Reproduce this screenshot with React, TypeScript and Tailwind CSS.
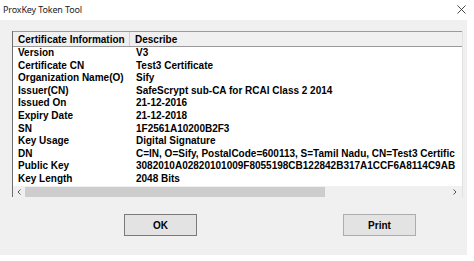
import React from "react";

const rows: [string, string][] = [
  ["Version", "V3"],
  ["Certificate CN", "Test3 Certificate"],
  ["Organization Name(O)", "Sify"],
  ["Issuer(CN)", "SafeScrypt sub-CA for RCAI Class 2 2014"],
  ["Issued On", "21-12-2016"],
  ["Expiry Date", "21-12-2018"],
  ["SN", "1F2561A10200B2F3"],
  ["Key Usage", "Digital Signature"],
  ["DN", "C=IN, O=Sify, PostalCode=600113, S=Tamil Nadu, CN=Test3 Certific"],
  ["Public Key", "3082010A02820101009F8055198CB122842B317A1CCF6A8114C9AB"],
  ["Key Length", "2048 Bits"],
];

export default function App() {
  return (
    <div
      className="w-[474px] h-[261px] bg-white flex flex-col overflow-hidden text-black"
      style={{ fontFamily: '"Liberation Sans", Arial, sans-serif' }}
    >
      {/* title bar */}
      <div className="h-[20px] flex items-center justify-between pl-[3px] pr-[8px] shrink-0">
        <span className="text-[9px] tracking-[-0.15px] text-[#222]" style={{ fontFamily: '"Noto Sans", sans-serif' }}>
          ProxKey Token Tool
        </span>
        <svg width="9" height="9" viewBox="0 0 9 9" className="mb-[1px]">
          <path d="M0.5 0.5 L8.5 8.5 M8.5 0.5 L0.5 8.5" stroke="#333" strokeWidth="0.9" />
        </svg>
      </div>

      {/* body */}
      <div className="w-[467px] h-[235px] bg-[#f0f0f0] pl-[12px] pt-[11px] flex flex-col">
        {/* list view */}
        <div className="w-[451px] h-[166px] border-l border-l-[#6e6e6e] border-r border-r-[#e2e2e2] flex flex-col">
          <div className="h-[16px] border-t border-b border-[#9a9a9a] flex items-center font-bold text-[10px] shrink-0">
            <div className="w-[117px] h-full pl-[5px] flex items-center border-r border-[#cfcfcf]">
              Certificate Information
            </div>
            <div className="pl-[5px]">Describe</div>
          </div>
          <div className="bg-white flex-1 overflow-hidden font-bold text-[10px]">
            {rows.map(([k, v]) => (
              <div key={k} className="flex h-[12.6px] leading-[12.6px] whitespace-nowrap">
                <div className="w-[117px] pl-[5px] shrink-0">{k}</div>
                <div className="pl-[6px] overflow-hidden w-[332px]">{v}</div>
              </div>
            ))}
          </div>
          {/* horizontal scrollbar */}
          <div className="h-[11px] bg-[#f0f0f0] flex items-center shrink-0">
            <div className="w-[12px] h-full flex items-center justify-center">
              <svg width="4" height="6" viewBox="0 0 4 6">
                <path d="M3.5 0.5 L1 3 L3.5 5.5" stroke="#555" strokeWidth="1" fill="none" />
              </svg>
            </div>
            <div className="w-[300px] h-[10px] bg-[#cdcdcd]" />
            <div className="flex-1" />
            <div className="w-[12px] h-full flex items-center justify-center mr-[1px]">
              <svg width="4" height="6" viewBox="0 0 4 6">
                <path d="M0.5 0.5 L3 3 L0.5 5.5" stroke="#555" strokeWidth="1" fill="none" />
              </svg>
            </div>
          </div>
        </div>

        {/* buttons */}
        <div className="flex mt-[17px] font-bold text-[10px]">
          <button className="ml-[112px] w-[73px] h-[22px] bg-[#e3e3e3] border border-[#7a7a7a] flex items-center justify-center">
            OK
          </button>
          <button className="ml-[146px] w-[73px] h-[22px] bg-[#e3e3e3] border border-[#adadad] flex items-center justify-center">
            Print
          </button>
        </div>
      </div>
    </div>
  );
}
